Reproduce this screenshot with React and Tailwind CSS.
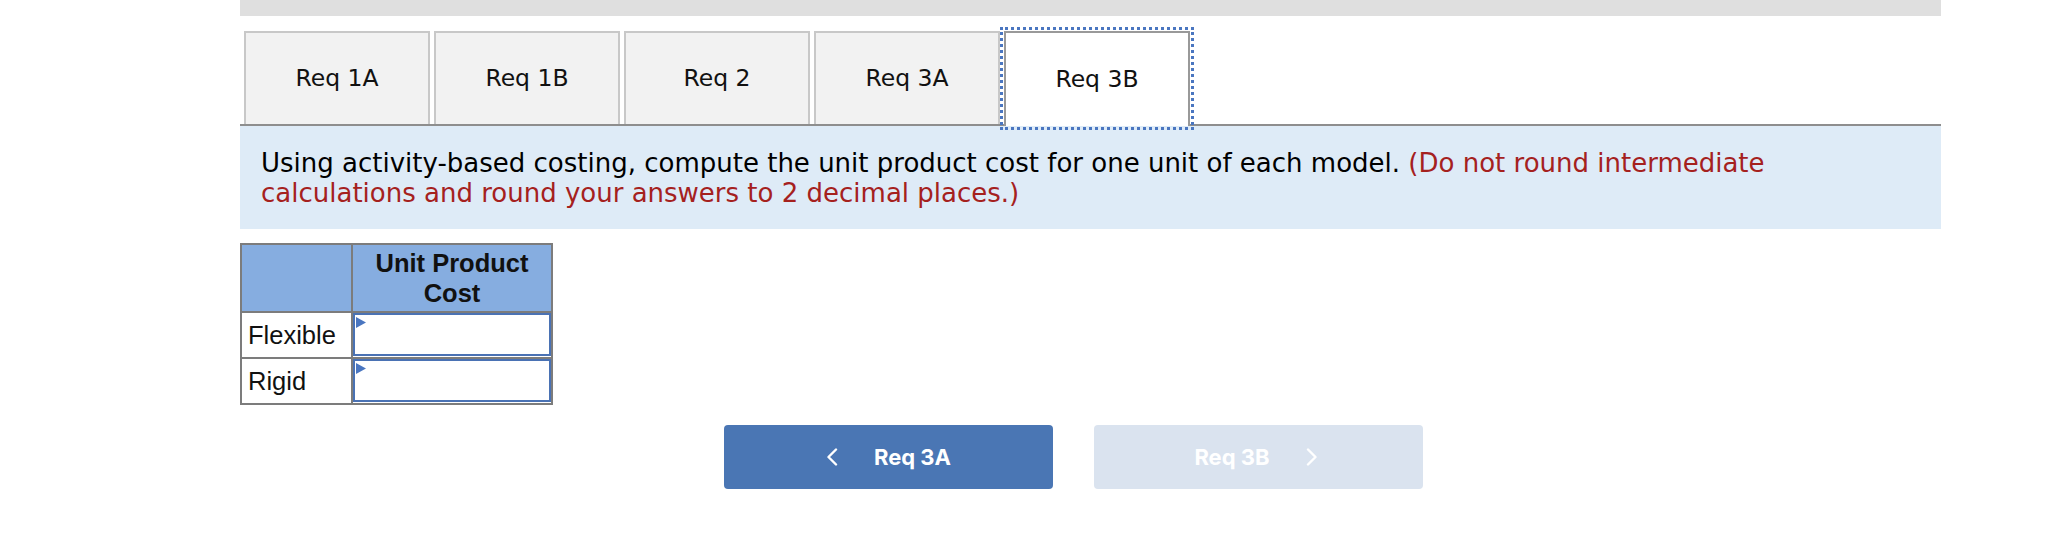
import React from "react";

const tabs = ["Req 1A", "Req 1B", "Req 2", "Req 3A"];

function Tri() {
  return (
    <svg className="absolute left-[1px] top-[2px]" width="10" height="11" viewBox="0 0 10 11">
      <polygon points="0,0 10,5.5 0,11" fill="#4a76c0" />
    </svg>
  );
}

export default function App() {
  return (
    <div className="w-[2054px] h-[554px] bg-white overflow-hidden">
      <div className="ml-[240px] w-[1701px]">
        <div className="h-[16px] bg-[#dfdfdf]" />
        <div className="flex items-end gap-[4px] pl-[4px] mt-[15px]" style={{ fontFamily: '"DejaVu Sans", Verdana, sans-serif' }}>
          {tabs.map((t) => (
            <div
              key={t}
              className="w-[186px] h-[93px] bg-[#f2f2f2] border-2 border-b-0 border-[#c8c8c8] flex items-center justify-center text-[23.5px] text-[#111]"
            >
              {t}
            </div>
          ))}
          <div className="relative z-10 -mb-[2px] w-[186px] h-[95px] bg-white border-2 border-b-0 border-[#999999] outline-[3px] outline-dotted outline-[#4a76c0] outline-offset-[1px] flex items-center justify-center text-[23.5px] text-[#111]">
            Req 3B
          </div>
        </div>
        <div
          className="border-t-2 border-[#8e8e8e] bg-[#deebf7] pl-[21px] pr-[10px] pt-[22px] pb-[21px] text-[26px] leading-[30px] text-black"
          style={{ fontFamily: '"DejaVu Sans", Verdana, sans-serif' }}
        >
          Using activity-based costing, compute the unit product cost for one unit of each model.{" "}
          <span className="text-[#a5211e]">
            (Do not round intermediate
            <br />
            calculations and round your answers to 2 decimal places.)
          </span>
        </div>

        <div
          className="mt-[14px] w-[313px] border-2 border-[#7c7c7c] text-[25.5px] text-[#111]"
          style={{ fontFamily: '"Liberation Sans", Arial, sans-serif' }}
        >
          <div className="flex border-b-2 border-[#7c7c7c] bg-[#86ade0] h-[68px]">
            <div className="w-[111px] border-r-2 border-[#7c7c7c]" />
            <div className="flex-1 flex items-center justify-center text-center font-bold leading-[30px] pb-[1px]">
              Unit Product
              <br />
              Cost
            </div>
          </div>
          <div className="flex border-b-2 border-[#7c7c7c] h-[46px]">
            <div className="w-[111px] border-r-2 border-[#7c7c7c] flex items-center pl-[6px]">Flexible</div>
            <div className="flex-1 pb-[1px]">
              <div className="relative h-full border-2 border-[#4a72b4] bg-white">
                <Tri />
              </div>
            </div>
          </div>
          <div className="flex h-[44px]">
            <div className="w-[111px] border-r-2 border-[#7c7c7c] flex items-center pl-[6px]">Rigid</div>
            <div className="flex-1 pb-[1px]">
              <div className="relative h-full border-2 border-[#4a72b4] bg-white">
                <Tri />
              </div>
            </div>
          </div>
        </div>

        <div
          className="mt-[20px] flex justify-center gap-[41px] pr-[34px] text-[22px] font-bold text-white"
          style={{ fontFamily: 'Inter, Roboto, sans-serif' }}
        >
          <div className="w-[329px] h-[64px] rounded-[4px] bg-[#4a76b4] flex items-center justify-center gap-[36px]">
            <svg width="12" height="18" viewBox="0 0 12 18">
              <polyline points="10,1.5 2.5,9 10,16.5" fill="none" stroke="white" strokeWidth="2.4" strokeLinecap="round" strokeLinejoin="round" />
            </svg>
            <span>Req 3A</span>
          </div>
          <div className="w-[329px] h-[64px] rounded-[4px] bg-[#dae3ef] flex items-center justify-center gap-[36px] pr-[5px]">
            <span>Req 3B</span>
            <svg width="12" height="18" viewBox="0 0 12 18">
              <polyline points="2,1.5 9.5,9 2,16.5" fill="none" stroke="white" strokeWidth="2.4" strokeLinecap="round" strokeLinejoin="round" />
            </svg>
          </div>
        </div>
      </div>
    </div>
  );
}
